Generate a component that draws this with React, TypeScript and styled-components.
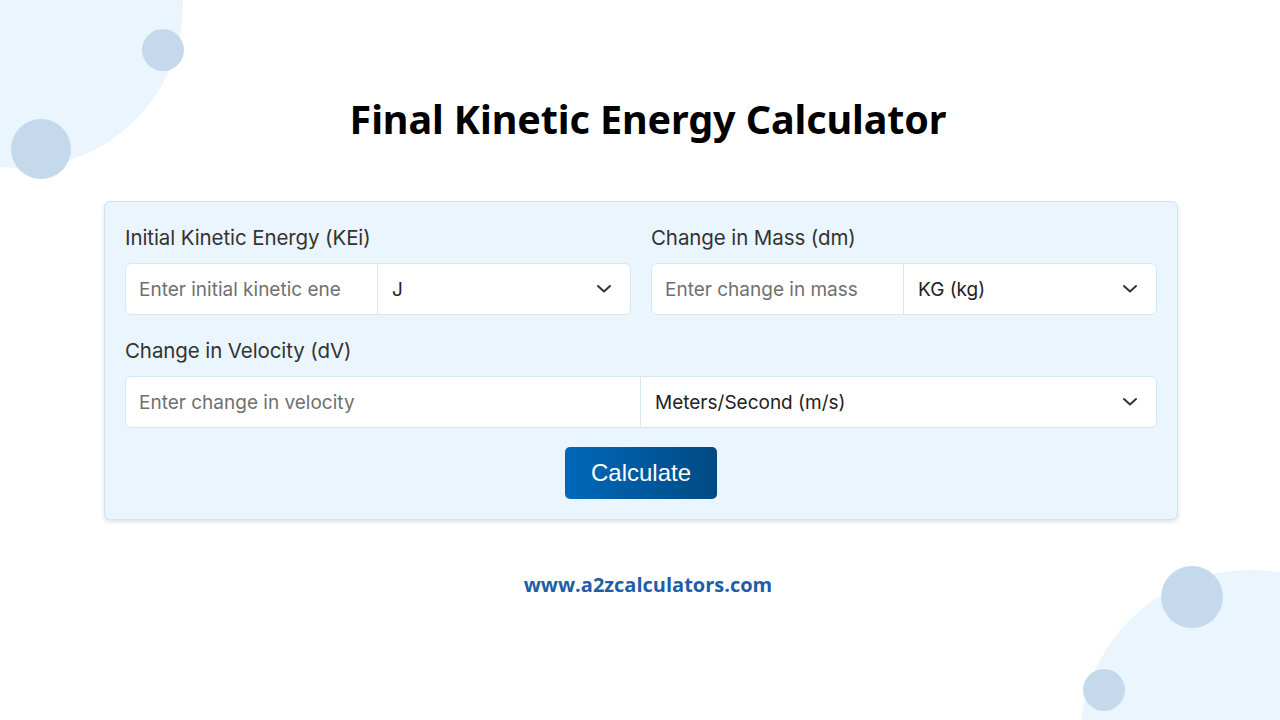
import React from 'react'
import styled, { createGlobalStyle } from 'styled-components'

const GlobalStyle = createGlobalStyle`
  html, body { margin: 0; padding: 0; background: #fff; }
  * { box-sizing: border-box; }
`

const Page = styled.div`
  position: relative;
  width: 1280px;
  height: 720px;
  overflow: hidden;
  background: #fff;
  display: flex;
  flex-direction: column;
  align-items: center;
`

const Blob = styled.div<{ x: number; y: number; r: number; tone: 'soft' | 'dot' }>`
  position: absolute;
  left: ${p => p.x - p.r}px;
  top: ${p => p.y - p.r}px;
  width: ${p => p.r * 2}px;
  height: ${p => p.r * 2}px;
  border-radius: 50%;
  background: ${p => (p.tone === 'soft' ? '#ebf5fe' : '#c4d9ec')};
  z-index: 0;
`

const Title = styled.h1`
  position: relative;
  z-index: 1;
  margin: 95px 0 0 16px;
  font-family: 'Noto Sans', 'Open Sans', sans-serif;
  font-weight: 700;
  font-size: 39.5px;
  line-height: 48px;
  color: #000;
  letter-spacing: -0.1px;
`

const Card = styled.form`
  position: relative;
  z-index: 1;
  margin: 58px 0 0 2px;
  width: 1074px;
  padding: 22px 20px 20px;
  background: #ebf5fe;
  border: 1.5px solid #d3e2ee;
  border-radius: 6px;
  box-shadow: 0 2px 4px rgba(0, 0, 0, 0.12);
  display: flex;
  flex-direction: column;
  gap: 22px;
`

const Row = styled.div<{ cols: number }>`
  display: grid;
  grid-template-columns: repeat(${p => p.cols}, 1fr);
  gap: 20px;
`

const Field = styled.div`
  display: flex;
  flex-direction: column;
  gap: 11px;
`

const Label = styled.label`
  font-family: Inter, 'Noto Sans', sans-serif;
  font-size: 20.5px;
  line-height: 28px;
  color: #333;
  letter-spacing: -0.1px;
`

const Group = styled.div`
  display: grid;
  grid-template-columns: 1fr 1fr;
  height: 52px;
  background: #fff;
  border: 1px solid #d3e8f8;
  border-radius: 6px;
  overflow: hidden;
`

const Input = styled.input`
  border: none;
  border-right: 1px solid #d3e8f8;
  outline: none;
  padding: 0 37px 0 13px;
  font-family: Inter, 'Noto Sans', sans-serif;
  font-size: 19px;
  color: #333;
  background: transparent;
  min-width: 0;
  &::placeholder { color: #707070; }
`

const SelectBox = styled.div`
  display: flex;
  align-items: center;
  justify-content: space-between;
  padding: 0 18px 0 14px;
  font-family: Inter, 'Noto Sans', sans-serif;
  font-size: 19px;
  color: #222;
`

const ButtonRow = styled.div`
  display: flex;
  justify-content: center;
  margin-top: -3px;
`

const CalcButton = styled.button`
  width: 152px;
  height: 52px;
  border: none;
  border-radius: 5px;
  background: linear-gradient(90deg, #0068bb 0%, #004a82 100%);
  color: #fff;
  font-family: 'Liberation Sans', Arial, sans-serif;
  font-size: 24px;
  cursor: pointer;
`

const Footer = styled.div`
  position: relative;
  z-index: 1;
  margin: 51px 0 0 16px;
  font-family: 'Open Sans', 'Noto Sans', sans-serif;
  font-weight: 700;
  font-size: 20px;
  color: #1f5ea6;
`

const Chevron = () => (
  <svg width="16" height="10" viewBox="0 0 16 10" fill="none">
    <path d="M2 2l6 5.5L14 2" stroke="#333" strokeWidth="2" strokeLinecap="round" strokeLinejoin="round" />
  </svg>
)

const UnitInput = ({ placeholder, unit }: { placeholder: string; unit: string }) => (
  <Group>
    <Input placeholder={placeholder} />
    <SelectBox>
      <span>{unit}</span>
      <Chevron />
    </SelectBox>
  </Group>
)

export default function App() {
  return (
    <Page>
      <GlobalStyle />
      <Blob x={20} y={5} r={163} tone="soft" />
      <Blob x={163} y={50} r={21} tone="dot" />
      <Blob x={41} y={149} r={30} tone="dot" />
      <Blob x={1250} y={740} r={170} tone="soft" />
      <Blob x={1192} y={597} r={31} tone="dot" />
      <Blob x={1104} y={690} r={21} tone="dot" />

      <Title>Final Kinetic Energy Calculator</Title>

      <Card onSubmit={e => e.preventDefault()}>
        <Row cols={2}>
          <Field>
            <Label>Initial Kinetic Energy (KEi)</Label>
            <UnitInput placeholder="Enter initial kinetic energy" unit="J" />
          </Field>
          <Field>
            <Label>Change in Mass (dm)</Label>
            <UnitInput placeholder="Enter change in mass" unit="KG (kg)" />
          </Field>
        </Row>
        <Row cols={1}>
          <Field>
            <Label>Change in Velocity (dV)</Label>
            <UnitInput placeholder="Enter change in velocity" unit="Meters/Second (m/s)" />
          </Field>
        </Row>
        <ButtonRow>
          <CalcButton type="submit">Calculate</CalcButton>
        </ButtonRow>
      </Card>

      <Footer>www.a2zcalculators.com</Footer>
    </Page>
  )
}
